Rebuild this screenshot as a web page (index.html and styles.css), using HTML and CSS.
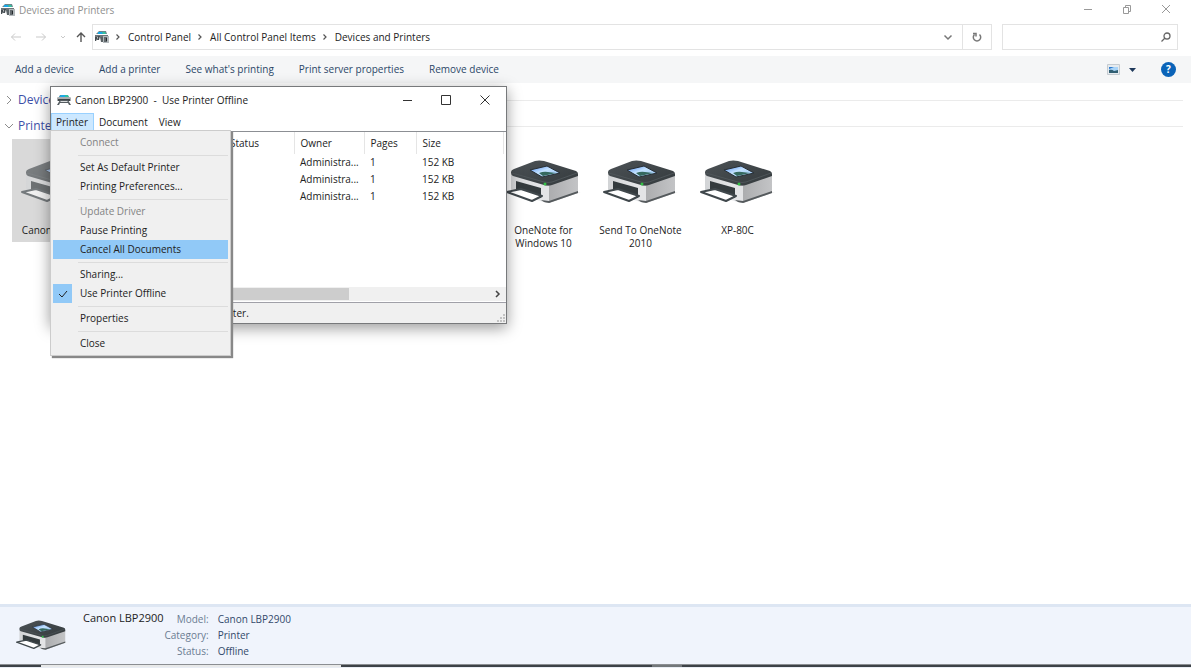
FILE: index.html
```html
<!DOCTYPE html>
<html lang="en">
<head>
<meta charset="utf-8">
<meta name="viewport" content="width=device-width, initial-scale=1">
<title>Devices and Printers</title>
<link rel="stylesheet" href="styles.css">
</head>
<body>
<svg class="defs" aria-hidden="true">
  <defs>
    <linearGradient id="side" x1="0" x2="1"><stop offset="0" stop-color="#a8a9ab"/><stop offset="1" stop-color="#c3c4c6"/></linearGradient>
    <linearGradient id="front" x1="0" x2="1"><stop offset="0" stop-color="#d2d4d6"/><stop offset="1" stop-color="#ebecee"/></linearGradient>
    <linearGradient id="lid" x1="0" x2="1" y2="1"><stop offset="0" stop-color="#4c5256"/><stop offset="1" stop-color="#343a3d"/></linearGradient>
    <linearGradient id="screen" x1="0" x2="1" y2="1"><stop offset="0" stop-color="#4f8df0"/><stop offset=".45" stop-color="#c4e2ff"/><stop offset="1" stop-color="#8fbdf0"/></linearGradient>
    <symbol id="printer" viewBox="0 0 76 46">
      <path d="M66 32l9 0-12 4z" fill="#eee"/>
      <path d="M5 14L44 26V43L5 34z" fill="url(#front)"/>
      <path d="M39 25L72 15V33L43 43L38 42z" fill="url(#side)"/>
      <path d="M34 24L43 26V43L34 41z" fill="#e3e4e6"/>
      <path d="M38 42l5 1 29-10v-2L43 41l-8-1z" fill="#555a5d"/>
      <path d="M5 12Q5 10 8 9L29 1Q33 0 38 1L70 11Q72 12 72 14V16L46 25Q42 26 38 25L7 16Q5 15 5 13z" fill="url(#lid)"/>
      <path d="M6 13L38 22Q42 23 46 22L71 13" fill="none" stroke="#4e5559"/>
      <path d="M24 10L41 6L54 13L36 17z" fill="url(#screen)" stroke="#272e34"/>
      <path d="M33 13Q38 11 42 12L50 13L37 16z" fill="#35695f"/>
      <path d="M10 21L35 28V38L10 31z" fill="#343b3e"/>
      <path d="M1 32L15 29L36 36L26 41z" fill="#fff" stroke="#40484c" stroke-width="2" stroke-linejoin="round"/>
      <circle cx="39" cy="24" r="1.5" fill="#33c145"/>
    </symbol>
    <symbol id="devices" viewBox="0 0 14 12">
      <path d="M2 2l2-2h7l1 3H1z" fill="#6d868d"/>
      <path d="M3 1h4l1 2H3z" fill="#1ba6e6"/><path d="M7 1h3l1 2H8z" fill="#33c3a0"/>
      <path d="M0 4h13v2H0z" fill="#6d7478"/>
      <path d="M0 6h2v2l-1 2H0zM3 5h2l-1 4H2z" fill="#454d52"/>
      <path d="M5 6h3v5H6z" fill="#5a6266"/>
      <path d="M8 5h6v7H8z" fill="#b3b9bc"/><path d="M9 6h3v5H9z" fill="#62696d"/><path d="M11 7h1v3h-1z" fill="#23292c"/>
    </symbol>
    <symbol id="mini" viewBox="0 0 14 10">
      <path d="M3 0h7l2 2H2z" fill="#5f8290"/>
      <path d="M4 0h4v2H2z" fill="#1dabe4"/><path d="M8 0h3l1 2H8z" fill="#2fc0a0"/>
      <path d="M0 3q0-1 2-1h10q2 0 2 1v3H0z" fill="#a9adaf"/><path d="M1 4h12v2H1z" fill="#3e4548"/>
      <path d="M3 5h8l3 5h-3l-1-2H4l-1 2H0z" fill="#555c60"/><path d="M4 6h6l1 1H3z" fill="#d9dcdd"/>
      <path d="M3 8h8l1 2H2z" fill="#fff"/>
    </symbol>
    <symbol id="right" viewBox="0 0 6 8"><path d="M1.500 1.500L4 4 1.500 6.500" fill="none" stroke="#555" stroke-width="1.200"/></symbol>
  </defs>
</svg>

<header class="titlebar">
  <svg class="app-icon"><use href="#devices"/></svg>
  <h1>Devices and Printers</h1>
  <div class="window-buttons">
    <button aria-label="Minimize"><svg viewBox="0 0 10 10"><path d="M1 5.500h8"/></svg></button>
    <button aria-label="Restore"><svg viewBox="0 0 10 10"><path d="M1.500 3.500h5v6h-5zM3.500 3V1.500h5v6H7"/></svg></button>
    <button aria-label="Close"><svg viewBox="0 0 10 10"><path d="M1 1l8 8M9 1L1 9"/></svg></button>
  </div>
</header>

<nav class="navbar" aria-label="Location">
  <div class="history">
    <button aria-label="Back"><svg viewBox="0 0 12 10"><path d="M11 5H1.500M5 1.500L1.500 5 5 8.500"/></svg></button>
    <button aria-label="Forward"><svg viewBox="0 0 12 10"><path d="M1 5h9.500M7 1.500L10.500 5 7 8.500"/></svg></button>
    <button class="recent" aria-label="Recent locations"><svg viewBox="0 0 6 10"><path d="M1 4l2 2 2-2"/></svg></button>
    <button class="up" aria-label="Up"><svg viewBox="0 0 12 10"><path d="M6 10V1M2 5l4-4 4 4"/></svg></button>
  </div>
  <div class="address">
    <svg class="app-icon"><use href="#devices"/></svg>
    <svg class="crumb"><use href="#right"/></svg><a href="#">Control Panel</a>
    <svg class="crumb"><use href="#right"/></svg><a href="#">All Control Panel Items</a>
    <svg class="crumb"><use href="#right"/></svg><a href="#">Devices and Printers</a>
    <button class="drop" aria-label="Previous locations"><svg viewBox="0 0 10 10"><path d="M1.500 3.500L5 7l3.500-3.500"/></svg></button>
    <button class="refresh" aria-label="Refresh"><svg viewBox="0 0 10 10"><path d="M7.500 2.500A3.700 3.700 0 1 1 2.500 2.500M1 1.500h3v3"/></svg></button>
  </div>
  <label class="search">
    <input type="search" aria-label="Search">
    <svg viewBox="0 0 10 10"><circle cx="6" cy="4" r="3"/><path d="M4 6L.5 9.500"/></svg>
  </label>
</nav>

<div class="toolbar" role="toolbar" aria-label="Commands">
  <button>Add a device</button>
  <button>Add a printer</button>
  <button>See what's printing</button>
  <button>Print server properties</button>
  <button>Remove device</button>
  <div class="view-tools">
    <button aria-label="Change view"><svg class="view-icon" viewBox="0 0 13 11"><path d="M.5.5h12v10H.5z" fill="#e6ebef" stroke="#c5cbd0"/><path d="M2 3h9v6H2z" fill="#a9d4f8"/><path d="M2 3h5L2 5z" fill="#2c79cf"/><path d="M2 6q3-1 5 1l4-1v3H2z" fill="#315f73"/></svg></button>
    <button aria-label="More views"><svg class="caret" viewBox="0 0 7 4"><path d="M0 0h7L3.500 4z"/></svg></button>
    <button class="help" aria-label="Help">?</button>
  </div>
</div>

<main class="content">
  <section>
    <h2><svg viewBox="0 0 10 10"><path d="M3 1l4 4-4 4"/></svg>Devices</h2>
  </section>
  <section>
    <h2><svg viewBox="0 0 10 10"><path d="M1 3l4 4 4-4"/></svg>Printers</h2>
    <ul class="printers">
      <li class="selected"><svg><use href="#printer"/></svg><span>Canon LBP2900</span></li>
      <li class="sixth"><svg><use href="#printer"/></svg><span>OneNote for Windows 10</span></li>
      <li><svg><use href="#printer"/></svg><span>Send To OneNote 2010</span></li>
      <li><svg><use href="#printer"/></svg><span>XP-80C</span></li>
    </ul>
  </section>
</main>

<footer class="details">
  <svg><use href="#printer"/></svg>
  <strong>Canon LBP2900</strong>
  <dl>
    <dt>Model:</dt><dd>Canon LBP2900</dd>
    <dt>Category:</dt><dd>Printer</dd>
    <dt>Status:</dt><dd>Offline</dd>
  </dl>
</footer>
<div class="taskbar"><span class="task-search"></span><span class="task-active"></span></div>

<div class="queue" role="dialog" aria-labelledby="queue-title">
  <header class="queue-title">
    <svg class="mini"><use href="#mini"/></svg>
    <h2 id="queue-title">Canon LBP2900 &nbsp;- &nbsp;Use Printer Offline</h2>
    <div class="window-buttons">
      <button aria-label="Minimize"><svg viewBox="0 0 10 10"><path d="M1 5.500h9"/></svg></button>
      <button aria-label="Maximize"><svg viewBox="0 0 10 10"><path d="M.5.5h9v9h-9z"/></svg></button>
      <button aria-label="Close"><svg viewBox="0 0 10 10"><path d="M.5.5l9 9M9.500.5l-9 9"/></svg></button>
    </div>
  </header>
  <div class="menubar" role="menubar">
    <button class="open" aria-haspopup="true">Printer</button>
    <button>Document</button>
    <button>View</button>
  </div>
  <div class="jobs">
    <table>
      <colgroup><col class="c-name"><col class="c-status"><col class="c-owner"><col class="c-pages"><col class="c-size"></colgroup>
      <thead><tr><td></td><th>Status</th><th>Owner</th><th>Pages</th><th>Size</th></tr></thead>
      <tbody>
        <tr><td></td><td></td><td>Administra...</td><td>1</td><td>152 KB</td></tr>
        <tr><td></td><td></td><td>Administra...</td><td>1</td><td>152 KB</td></tr>
        <tr><td></td><td></td><td>Administra...</td><td>1</td><td>152 KB</td></tr>
      </tbody>
    </table>
    <div class="scrollbar"><span class="thumb"></span><button aria-label="Scroll right"><svg viewBox="0 0 6 8"><path d="M1 1l3 3-3 3"/></svg></button></div>
  </div>
  <div class="queue-status"><span>printer.</span>
    <svg viewBox="0 0 9 9"><path d="M6 0h2v2H6zM3 3h2v2H3zM6 3h2v2H6zM0 6h2v2H0zM3 6h2v2H3zM6 6h2v2H6z"/></svg>
  </div>

  <div class="menu" role="menu">
    <button role="menuitem" disabled>Connect</button>
    <hr>
    <button role="menuitem">Set As Default Printer</button>
    <button role="menuitem">Printing Preferences...</button>
    <hr>
    <button role="menuitem" disabled>Update Driver</button>
    <button role="menuitem">Pause Printing</button>
    <button role="menuitem" class="active">Cancel All Documents</button>
    <hr>
    <button role="menuitem">Sharing...</button>
    <button role="menuitemcheckbox" aria-checked="true"><i class="check"><svg viewBox="0 0 10 10"><path d="M1 5l3 3 5-6"/></svg></i>Use Printer Offline</button>
    <hr>
    <button role="menuitem">Properties</button>
    <hr>
    <button role="menuitem">Close</button>
  </div>
</div>
</body>
</html>
```

FILE: styles.css
```css
* { box-sizing: border-box; }

body {
  margin: 0;
  min-height: 100vh;
  display: flex;
  flex-direction: column;
  background: #fff;
  color: #222;
  font: 10px/13px "Open Sans", "Noto Sans", sans-serif;
}

button, input { font: inherit; color: inherit; }
button { border: 0; padding: 0; background: none; }
h1, h2, ul, dl, dd { margin: 0; padding: 0; font-size: inherit; font-weight: 400; }
a { color: inherit; text-decoration: none; }
svg { display: block; flex: none; fill: none; stroke-width: 1; }
.defs { position: absolute; width: 0; height: 0; }
.app-icon { width: 14px; height: 12px; }

/* Main window caption */
.titlebar { display: flex; align-items: center; height: 20px; padding: 0 0 0 1px; gap: 4px; color: #8f8f8f; }
.window-buttons { display: flex; margin-left: auto; padding-right: 2px; }
.window-buttons button { display: grid; place-items: center; width: 39px; height: 18px; }
.window-buttons svg { width: 10px; height: 10px; stroke: #999; }
.titlebar .window-buttons { padding-right: 6px; padding-bottom: 2px; }

/* Navigation row */
.navbar { display: flex; align-items: center; height: 36px; padding: 0 13px 2px 10px; }
.history { display: flex; align-items: center; gap: 13px; margin-right: 5px; }
.history svg { width: 12px; height: 10px; stroke: #c9c9c9; }
.history .recent svg { width: 6px; }
.history .recent { margin-right: -4px; }
.history .up svg { stroke: #555; stroke-width: 1.4; }
.address { display: flex; align-items: center; flex: 1; height: 26px; border: 1px solid #e3e3e3; padding-left: 2px; }
.crumb { width: 6px; height: 8px; margin: 0 7px 0 6px; }
.drop { margin-left: auto; width: 28px; display: grid; place-items: center; }
.refresh { width: 29px; height: 24px; display: grid; place-items: center; border-left: 1px solid #e3e3e3; }
.address button svg { width: 10px; height: 10px; stroke: #777; stroke-width: 1.5; }
.search { display: flex; align-items: center; width: 176px; height: 26px; margin-left: 10px; padding-right: 6px; border: 1px solid #e3e3e3; }
.search input { flex: 1; min-width: 0; border: 0; outline: 0; background: none; }
.search svg { width: 10px; height: 10px; stroke: #666; stroke-width: 1.3; }

/* Command bar */
.toolbar { display: flex; align-items: center; height: 27px; padding: 0 15px; gap: 25px; background: #f5f6f7; color: #2c4768; }
.view-tools { display: flex; align-items: center; gap: 9px; margin-left: auto; }
.view-icon { width: 13px; height: 11px; }
.caret { width: 7px; height: 4px; fill: #1e395b; }
.help { width: 15px; height: 15px; margin-left: 16px; border-radius: 50%; background: #0a63b8; color: #fff; font-weight: 700; line-height: 15px; }

/* Device groups */
.content { flex: 1; padding-top: 4px; }
.content h2 { display: flex; align-items: center; height: 26px; padding: 0 8px 0 4px; gap: 4px; color: #3c4fa8; font-size: 12px; line-height: 16px; }
.content h2 svg { width: 10px; height: 10px; stroke: #8c8c8c; }
.content h2::after { content: ""; flex: 1; height: 1px; margin-left: 4px; background: #ebebeb; }
.printers { display: grid; grid-template-columns: repeat(auto-fill, 93px); gap: 4px; margin: 0 12px; list-style: none; }
.printers li { display: flex; flex-direction: column; align-items: center; height: 103px; padding: 21px 2px 0; text-align: center; }
.printers svg { width: 76px; height: 46px; }
.printers span { margin-top: 18px; }
.printers .selected { background: #d9d9d9; }
.selected svg { opacity: .65; }
.printers .sixth { grid-column-start: 6; }

/* Selected device summary */
.details { display: flex; height: 60px; padding: 4px 16px 0; border-top: 3px solid #dde6f3; background: #f0f4fc; }
.details > svg { width: 52px; height: 32px; margin-top: 9px; }
.details strong { margin-left: 15px; font-size: 11px; line-height: 14px; font-weight: 400; }
.details dl { display: grid; grid-template-columns: 45px auto; column-gap: 9px; align-content: start; line-height: 16px; color: #33496b; }
.details dt { color: #6b7c92; text-align: right; }
.taskbar { display: flex; height: 4px; padding-left: 41px; border-top: 1px solid #8b8e92; border-bottom: 1px solid #e9edf4; background: #3d4247; }
.task-search { width: 300px; background: #e8e9e9; }
.task-active { width: 30px; margin-left: 311px; background: #73777a; }

/* Print queue window */
.queue {
  position: absolute;
  left: 50px;
  top: 86px;
  width: 457px;
  border: 1px solid #77797b;
  background: #fff;
  box-shadow: 0 4px 14px rgba(0, 0, 0, .4);
}
.queue-title { display: flex; align-items: center; height: 26px; padding-left: 6px; gap: 4px; }
.queue-title .mini { width: 14px; height: 10px; }
.queue-title .window-buttons svg { stroke: #333; }
.menubar { display: flex; height: 18px; }
.menubar button { padding: 0 6px 0 5px; }
.menubar .open { background: #cce8ff; box-shadow: inset 0 0 0 1px #99d1ff; }
.jobs { display: flex; flex-direction: column; height: 172px; border-top: 1px solid #8c8f94; border-bottom: 1px solid #a0a0a8; }
.jobs table { width: 453px; border-collapse: collapse; table-layout: fixed; }
.jobs th, .jobs td { height: 17px; padding: 0 0 0 6px; text-align: left; font-weight: 400; white-space: nowrap; }
.jobs thead th { height: 22px; border-right: 1px solid #e5e5e5; }
.c-name { width: 173px; }
.c-status { width: 70px; }
.c-owner { width: 70px; }
.c-pages { width: 52px; }
.scrollbar { display: flex; align-items: center; margin-top: auto; margin-bottom: 1px; height: 14px; background: #f0f0f0; }
.thumb { width: 298px; height: 12px; background: #cdcdcd; }
.scrollbar button { margin-left: auto; padding: 0 5px; }
.scrollbar svg { width: 6px; height: 8px; stroke: #444; stroke-width: 1.5; }
.queue-status { display: flex; align-items: center; justify-content: space-between; height: 20px; padding-left: 163px; background: #f0f0f0; }
.queue-status svg { width: 9px; height: 9px; align-self: flex-end; fill: #c3c3c3; }

/* Printer drop-down */
.menu {
  position: absolute;
  left: -1px;
  top: 43px;
  width: 181px;
  padding: 2px;
  border: 1px solid #ccc;
  background: #f0f0f0;
  box-shadow: 2px 2px 1px #888;
}
.menu button { display: flex; align-items: center; position: relative; width: 100%; height: 19px; padding-left: 27px; }
.menu button:disabled { color: #838383; }
.menu .active { background: #91c9f7; }
.menu hr { height: 1px; margin: 3px 0 2px 25px; border: 0; background: #dcdcdc; }
.check { position: absolute; left: 0; top: 0; display: grid; place-items: center; width: 19px; height: 19px; background: #91c9f7; }
.check svg { width: 10px; height: 10px; stroke: #222; }
```
